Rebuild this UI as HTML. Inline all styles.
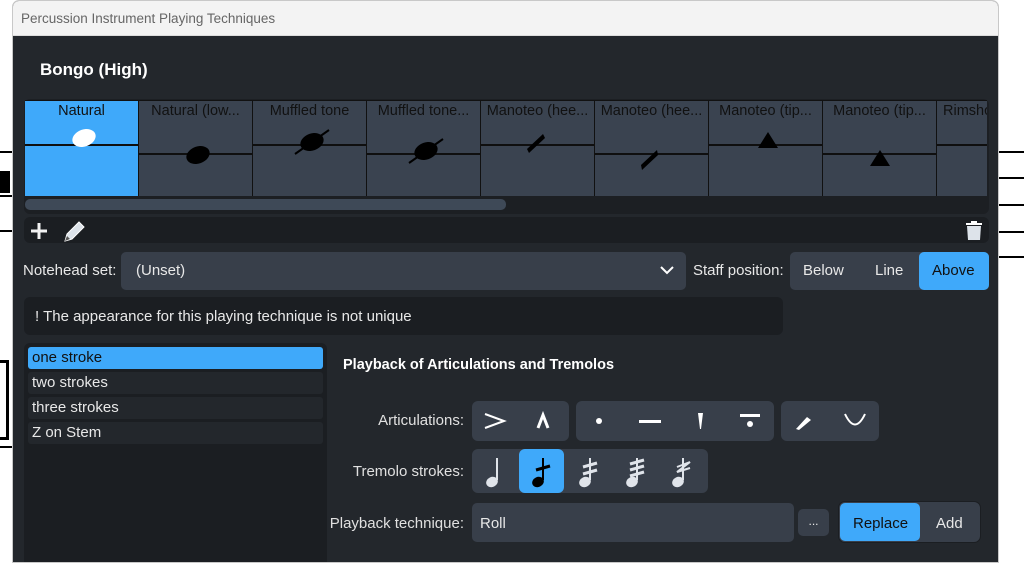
<!DOCTYPE html>
<html><head><meta charset="utf-8"><style>
*{box-sizing:border-box;margin:0;padding:0}
body{width:1024px;height:563px;overflow:hidden;background:#fff;position:relative;font-family:"Liberation Sans",sans-serif;font-size:15px;color:#e8e8e8}
.a{position:absolute}
.ln{position:absolute;background:#000;height:2px}
.win{left:12px;top:0;width:987px;height:563px;border:1px solid #c8c8c8;border-radius:7px 7px 0 0;overflow:hidden;background:#23272c}
.title{left:0;top:0;width:100%;height:35px;background:#f3f3f3;border-bottom:1px solid #ddd;color:#666;font-size:13.5px;padding:10px 0 0 8px}
.tile{position:absolute;top:0;width:114px;height:96px;background:#3a4350;border-right:1px solid #111;color:#111;font-size:14.5px;text-align:center;padding-top:2px;white-space:nowrap;overflow:hidden}
.tile .s{position:absolute;left:0;right:0;height:2px;background:#0f0f0f}
.ctl{background:#383f4a;border-radius:5px}
.pan{background:#1b1e22;border-radius:6px}
.it{position:absolute;left:4px;width:295px;height:22px;background:#23272c;border-radius:3px;padding:2px 0 0 4px;font-size:15px}
.grp{position:absolute;background:#383f4a;border-radius:6px}
.lbl{position:absolute;text-align:right;font-size:15px;color:#e0e0e0}
</style></head><body>
<div class="ln" style="left:0;top:151px;width:12px"></div>
<div class="a" style="left:0;top:171px;width:10px;height:22px;background:#000"></div>
<div class="ln" style="left:0;top:195px;width:12px"></div>
<div class="ln" style="left:0;top:230px;width:12px"></div>
<div class="a" style="left:0;top:360px;width:9px;height:80px;border:3px solid #000;border-left:none"></div>
<div class="ln" style="left:0;top:446px;width:12px"></div>
<div class="ln" style="left:999px;top:151px;width:25px"></div>
<div class="ln" style="left:999px;top:177px;width:25px"></div>
<div class="ln" style="left:999px;top:204px;width:25px"></div>
<div class="ln" style="left:999px;top:231px;width:25px"></div>
<div class="ln" style="left:999px;top:256px;width:25px"></div>

<div class="a win">
<div class="a title">Percussion Instrument Playing Techniques</div>
<div class="a" style="left:27px;top:59px;font-size:17px;font-weight:bold;color:#fff">Bongo (High)</div>

<div class="a pan" style="left:11px;top:98px;width:965px;height:115px;background:#1c1f23"></div>
<div class="a" style="left:12px;top:99px;width:962px;height:96px;overflow:hidden;border-top:1px solid #111">
 <div class="tile" style="left:0;background:#3fa9fa">Natural<div class="s" style="top:43px"></div><svg class="a" style="left:46px;top:26px" width="26" height="22"><ellipse cx="13" cy="11" rx="12" ry="8.5" transform="rotate(-20 13 11)" fill="#fff"/></svg></div>
 <div class="tile" style="left:114px">Natural (low...<div class="s" style="top:52px"></div><svg class="a" style="left:46px;top:43px" width="26" height="22"><ellipse cx="13" cy="11" rx="12" ry="8.5" transform="rotate(-20 13 11)" fill="#000"/></svg></div>
 <div class="tile" style="left:228px">Muffled tone<div class="s" style="top:43px"></div><svg class="a" style="left:40px;top:26px" width="40" height="30"><line x1="2" y1="27" x2="36" y2="3" stroke="#000" stroke-width="2"/><ellipse cx="19" cy="15" rx="12" ry="8.5" transform="rotate(-20 19 15)" fill="#000"/></svg></div>
 <div class="tile" style="left:342px">Muffled tone...<div class="s" style="top:52px"></div><svg class="a" style="left:40px;top:35px" width="40" height="30"><line x1="2" y1="27" x2="36" y2="3" stroke="#000" stroke-width="2"/><ellipse cx="19" cy="15" rx="12" ry="8.5" transform="rotate(-20 19 15)" fill="#000"/></svg></div>
 <div class="tile" style="left:456px">Manoteo (hee...<div class="s" style="top:43px"></div><svg class="a" style="left:44px;top:28px" width="24" height="24"><path d="M2 20 L18 5 L20 9 L4 24Z" fill="#000"/></svg></div>
 <div class="tile" style="left:570px">Manoteo (hee...<div class="s" style="top:52px"></div><svg class="a" style="left:44px;top:46px" width="24" height="24"><path d="M2 18 L18 3 L19 8 L3 23Z" fill="#000"/></svg></div>
 <div class="tile" style="left:684px">Manoteo (tip...<div class="s" style="top:43px"></div><svg class="a" style="left:48px;top:30px" width="22" height="18"><path d="M1 17 L11 1 L21 17Z" fill="#000"/></svg></div>
 <div class="tile" style="left:798px">Manoteo (tip...<div class="s" style="top:52px"></div><svg class="a" style="left:46px;top:48px" width="22" height="18"><path d="M1 17 L11 1 L21 17Z" fill="#000"/></svg></div>
 <div class="tile" style="left:912px;text-align:left;padding-left:6px">Rimshot<div class="s" style="top:43px"></div></div>
</div>
<div class="a" style="left:12px;top:198px;width:481px;height:11px;background:#3e4957;border-radius:5px"></div>

<div class="a pan" style="left:11px;top:216px;width:965px;height:26px"></div>
<svg class="a" style="left:15px;top:219px" width="22" height="22"><path d="M11 3V19M3 11H19" stroke="#f2f2f2" stroke-width="3"/></svg>
<svg class="a" style="left:48px;top:218px" width="26" height="26"><path d="M4 22 L6 15 L18 3 L23 8 L11 20Z" fill="#dde3ea" stroke="#fff" stroke-width="1"/><path d="M4 22 L6 17 L9 20Z" fill="#555"/></svg>
<svg class="a" style="left:951px;top:219px" width="20" height="22"><rect x="2" y="3" width="16" height="2" fill="#fff"/><rect x="7" y="1" width="6" height="2" fill="#fff"/><path d="M3 6 H17 L16 20 H4Z" fill="#dde3ea"/></svg>

<div class="a" style="left:10px;top:261px">Notehead set:</div>
<div class="a ctl" style="left:108px;top:251px;width:565px;height:38px"></div>
<div class="a" style="left:123px;top:261px">(Unset)</div>
<svg class="a" style="left:647px;top:264px" width="14" height="10"><path d="M1 2 L7 8 L13 2" stroke="#fff" stroke-width="2" fill="none"/></svg>
<div class="a" style="left:680px;top:261px">Staff position:</div>
<div class="a ctl" style="left:777px;top:251px;width:199px;height:38px"></div>
<div class="a" style="left:906px;top:251px;width:70px;height:38px;background:#3fa9fa;border-radius:5px"></div>
<div class="a" style="left:790px;top:261px">Below</div>
<div class="a" style="left:862px;top:261px">Line</div>
<div class="a" style="left:919px;top:261px;color:#111">Above</div>

<div class="a pan" style="left:11px;top:296px;width:759px;height:38px"></div>
<div class="a" style="left:22px;top:307px">! The appearance for this playing technique is not unique</div>

<div class="a pan" style="left:11px;top:342px;width:303px;height:230px">
 <div class="it" style="top:4px;background:#3fa9fa;color:#111">one stroke</div>
 <div class="it" style="top:29px">two strokes</div>
 <div class="it" style="top:54px">three strokes</div>
 <div class="it" style="top:79px">Z on Stem</div>
</div>

<div class="a" style="left:330px;top:356px;font-weight:bold;color:#fff;font-size:14.5px">Playback of Articulations and Tremolos</div>

<div class="lbl" style="left:300px;width:151px;top:411px">Articulations:</div>
<div class="grp" style="left:459px;top:400px;width:97px;height:40px"></div>
<div class="grp" style="left:563px;top:400px;width:198px;height:40px"></div>
<div class="grp" style="left:768px;top:400px;width:98px;height:40px"></div>
<svg class="a" style="left:459px;top:400px" width="420" height="40">
 <path d="M13 13 L32 20 L13 27" stroke="#fff" stroke-width="2" fill="none"/>
 <path d="M66 27 L71 14 L76 27" stroke="#fff" stroke-width="3" fill="none"/>
 <circle cx="127" cy="20" r="3" fill="#fff"/>
 <rect x="167" y="19" width="22" height="3" fill="#fff"/>
 <path d="M226 12 L231 12 L229 28 L228 28Z" fill="#fff"/>
 <rect x="268" y="13" width="20" height="3" fill="#fff"/><circle cx="278" cy="23" r="3" fill="#fff"/>
 <path d="M324 28 L335 16 L339 19 L327 29Z" fill="#fff"/>
 <path d="M373 13 Q383 34 393 13" stroke="#fff" stroke-width="2" fill="none"/>
</svg>

<div class="lbl" style="left:300px;width:151px;top:462px">Tremolo strokes:</div>
<div class="grp" style="left:459px;top:448px;width:236px;height:44px"></div>
<div class="a" style="left:506px;top:448px;width:45px;height:44px;background:#3fa9fa;border-radius:6px"></div>
<svg class="a" style="left:459px;top:448px" width="240" height="44">
 <g fill="#e0e4ea" stroke="#e0e4ea"><ellipse cx="20" cy="33" rx="6" ry="5" transform="rotate(-25 20 33)" stroke="none"/><line x1="25" y1="31" x2="25" y2="9" stroke-width="2"/></g>
 <g fill="#000" stroke="#000"><ellipse cx="66" cy="33" rx="6" ry="5" transform="rotate(-25 66 33)" stroke="none"/><line x1="71" y1="31" x2="71" y2="9" stroke-width="2"/><line x1="64" y1="21" x2="78" y2="17" stroke-width="3"/></g>
 <g fill="#e0e4ea" stroke="#e0e4ea"><ellipse cx="113" cy="33" rx="6" ry="5" transform="rotate(-25 113 33)" stroke="none"/><line x1="118" y1="31" x2="118" y2="9" stroke-width="2"/><line x1="111" y1="18" x2="125" y2="14" stroke-width="3"/><line x1="111" y1="25" x2="125" y2="21" stroke-width="3"/></g>
 <g fill="#e0e4ea" stroke="#e0e4ea"><ellipse cx="160" cy="33" rx="6" ry="5" transform="rotate(-25 160 33)" stroke="none"/><line x1="165" y1="31" x2="165" y2="9" stroke-width="2"/><line x1="158" y1="15" x2="172" y2="11" stroke-width="3"/><line x1="158" y1="21" x2="172" y2="17" stroke-width="3"/><line x1="158" y1="27" x2="172" y2="23" stroke-width="3"/></g>
 <g fill="#e0e4ea" stroke="#e0e4ea"><ellipse cx="206" cy="33" rx="6" ry="5" transform="rotate(-25 206 33)" stroke="none"/><line x1="211" y1="31" x2="211" y2="9" stroke-width="2"/><path d="M205 18 L218 13 L205 23 L218 19" stroke-width="2" fill="none"/></g>
</svg>

<div class="lbl" style="left:300px;width:151px;top:514px">Playback technique:</div>
<div class="a ctl" style="left:459px;top:502px;width:322px;height:39px"></div>
<div class="a" style="left:467px;top:514px">Roll</div>
<div class="a ctl" style="left:785px;top:508px;width:31px;height:27px;text-align:center;font-size:12px;padding-top:5px">...</div>
<div class="a" style="left:825px;top:500px;width:143px;height:42px;background:#383f4a;border:1px solid #1b1e22;border-radius:7px"></div>
<div class="a" style="left:827px;top:502px;width:80px;height:38px;background:#3fa9fa;border-radius:5px"></div>
<div class="a" style="left:840px;top:514px;color:#111">Replace</div>
<div class="a" style="left:923px;top:514px">Add</div>
</div>
</body></html>
